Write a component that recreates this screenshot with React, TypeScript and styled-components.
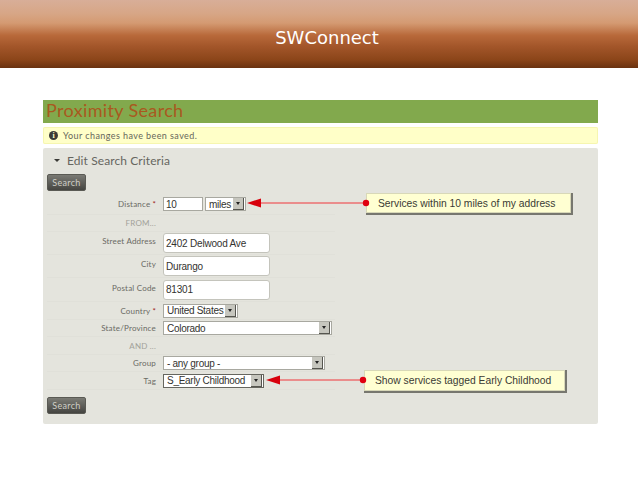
import React from 'react';
import styled, { createGlobalStyle } from 'styled-components';

const GlobalStyle = createGlobalStyle`
  html, body {
    margin: 0;
    padding: 0;
    background: #fff;
  }
`;

const Slide = styled.div`
  width: 638px;
  height: 478px;
  overflow: hidden;
  background: #fff;
`;

const Banner = styled.header`
  height: 68px;
  display: flex;
  align-items: center;
  justify-content: center;
  padding-left: 16px;
  padding-top: 7px;
  box-sizing: border-box;
  background: linear-gradient(
    to bottom,
    #d8ae98 0%,
    #d7a686 20%,
    #d49a72 34%,
    #b8693a 52%,
    #a3562a 68%,
    #8b4519 88%,
    #6a3210 100%
  );
  color: #fff;
  font-family: 'DejaVu Sans', Verdana, sans-serif;
  font-size: 18px;
`;

const Content = styled.main`
  margin: 32px 40px 0 43px;
  display: flex;
  flex-direction: column;
  gap: 4px;
`;

const TitleBar = styled.h1`
  margin: 0;
  height: 23px;
  padding-left: 3px;
  background: #82a94d;
  color: #a9591f;
  font-family: Lato, 'Open Sans', sans-serif;
  font-size: 18px;
  font-weight: 400;
  line-height: 20px;
  letter-spacing: 0.35px;
`;

const Notice = styled.div`
  height: 17px;
  display: flex;
  align-items: center;
  gap: 5px;
  padding-left: 6px;
  background: #ffffc8;
  border-radius: 2px;
  box-shadow: inset 0 0 0 1px #f6f6b0;
  color: #66665a;
  font-family: Lato, sans-serif;
  font-size: 9px;
  letter-spacing: 0.42px;
`;

const InfoDot = styled.span`
  width: 9px;
  height: 9px;
  border-radius: 50%;
  background: #3c3c38;
  color: #ffffc8;
  font-family: 'Liberation Serif', serif;
  font-size: 8px;
  font-weight: 700;
  line-height: 9px;
  text-align: center;
  letter-spacing: 0;
`;

const Panel = styled.section`
  position: relative;
  height: 276px;
  padding: 5px 4px 0;
  box-sizing: border-box;
  background: #e4e4dd;
  border-radius: 2px;
`;

const PanelTitle = styled.h2`
  margin: 0 0 6px 7px;
  height: 15px;
  display: flex;
  align-items: center;
  gap: 7px;
  color: #66665f;
  font-family: Lato, sans-serif;
  font-size: 12px;
  font-weight: 400;
  letter-spacing: 0.1px;
`;

const Caret = styled.span`
  width: 0;
  height: 0;
  margin-top: -1px;
  border-left: 3px solid transparent;
  border-right: 3px solid transparent;
  border-top: 3px solid #3a3a36;
`;

const SearchButton = styled.button`
  display: block;
  width: 39px;
  height: 17px;
  padding: 0;
  border: 1px solid #5a5a54;
  border-radius: 2px;
  background: linear-gradient(to bottom, #7a7a74, #454541);
  color: #cfcfc7;
  font-family: Lato, sans-serif;
  font-size: 9px;
  letter-spacing: 0.3px;
`;

const Form = styled.div`
  width: 288px;
  margin: 3px 0 7px;
  display: grid;
  grid-template-columns: 109px 1fr;
`;

const Label = styled.div<{ $height: number; $muted?: boolean }>`
  height: ${p => p.$height}px;
  display: flex;
  align-items: center;
  justify-content: flex-end;
  padding-bottom: ${p => (p.$height > 21 ? 4 : 0)}px;
  box-sizing: border-box;
  border-bottom: 1px solid #e0e0d9;
  color: ${p => (p.$muted ? '#a2a29a' : '#6a6a64')};
  font-family: Lato, sans-serif;
  font-size: 8px;
  letter-spacing: 0.2px;
  white-space: nowrap;
`;

const Required = styled.span`
  margin-left: 2px;
  color: #a02020;
`;

const Cell = styled.div<{ $height: number }>`
  height: ${p => p.$height}px;
  display: flex;
  align-items: center;
  gap: 2px;
  padding-left: 7px;
  box-sizing: border-box;
  border-bottom: 1px solid #e0e0d9;
`;

const TextBox = styled.input<{ $width: number; $round?: boolean }>`
  width: ${p => p.$width}px;
  height: ${p => (p.$round ? 20 : 14)}px;
  padding: 0 2px;
  box-sizing: border-box;
  border: 1px solid ${p => (p.$round ? '#c4c4bc' : '#a8a8a0')};
  border-radius: ${p => (p.$round ? 3 : 0)}px;
  background: #fff;
  color: #33332f;
  font-family: 'Liberation Sans', Arial, sans-serif;
  font-size: 10px;
  letter-spacing: -0.2px;
  outline: none;
`;

const SelectBox = styled.div<{ $width: number; $dark?: boolean }>`
  width: ${p => p.$width}px;
  height: 14px;
  display: flex;
  align-items: center;
  justify-content: space-between;
  padding: 0 1px 0 3px;
  box-sizing: border-box;
  border: 1px solid ${p => (p.$dark ? '#66665f' : '#a8a8a0')};
  background: #fff;
  color: #33332f;
  font-family: 'Liberation Sans', Arial, sans-serif;
  font-size: 10px;
  letter-spacing: -0.28px;
  white-space: nowrap;
`;

const SelectArrow = styled.span`
  width: 11px;
  height: 12px;
  display: flex;
  align-items: center;
  justify-content: center;
  flex-shrink: 0;
  background: #c6c6be;
  border-right: 1px solid #55554f;
  border-bottom: 1px solid #55554f;
  box-sizing: border-box;

  &::after {
    content: '';
    border-left: 2.5px solid transparent;
    border-right: 2.5px solid transparent;
    border-top: 3px solid #222;
  }
`;

const Callout = styled.div<{ $top: number; $left: number; $width: number; $height: number; $pad: number }>`
  position: absolute;
  top: ${p => p.$top}px;
  left: ${p => p.$left}px;
  width: ${p => p.$width}px;
  height: ${p => p.$height}px;
  display: flex;
  align-items: center;
  padding-left: ${p => p.$pad}px;
  box-sizing: border-box;
  background: #ffffd2;
  border: 1px solid #d8d8b8;
  box-shadow: 1px 1px 0 1px #77776f;
  color: #3a3a34;
  font-family: 'Liberation Sans', Arial, sans-serif;
  font-size: 10.3px;
  white-space: nowrap;
`;

const ArrowSvg = styled.svg<{ $top: number; $left: number }>`
  position: absolute;
  top: ${p => p.$top}px;
  left: ${p => p.$left}px;
`;

const Pointer = ({ top, left, width }: { top: number; left: number; width: number }) => (
  <ArrowSvg $top={top} $left={left} width={width} height={12} viewBox={`0 0 ${width} 12`}>
    <line x1={10} y1={6} x2={width - 4} y2={6} stroke="#f0373c" strokeWidth={1.2} />
    <polygon points="0,6 14,1.5 14,10.5" fill="#d8000c" />
    <circle cx={width - 4} cy={6} r={3.2} fill="#e00010" />
  </ArrowSvg>
);

const rows = [
  { label: 'Distance', required: true, h: 21 },
  { label: 'FROM...', muted: true, h: 17 },
  { label: 'Street Address', h: 23 },
  { label: 'City', h: 23 },
  { label: 'Postal Code', h: 24 },
  { label: 'Country', required: true, h: 18 },
  { label: 'State/Province', h: 17 },
  { label: 'AND ...', muted: true, h: 18 },
  { label: 'Group', h: 17 },
  { label: 'Tag', h: 18 },
];

const Fields: React.ReactNode[] = [
  <>
    <TextBox $width={40} defaultValue="10" />
    <SelectBox $width={41}>miles<SelectArrow /></SelectBox>
  </>,
  null,
  <TextBox $round $width={107} defaultValue="2402 Delwood Ave" />,
  <TextBox $round $width={107} defaultValue="Durango" />,
  <TextBox $round $width={107} defaultValue="81301" />,
  <SelectBox $width={75}>United States<SelectArrow /></SelectBox>,
  <SelectBox $width={169}>Colorado<SelectArrow /></SelectBox>,
  null,
  <SelectBox $width={162}>- any group -<SelectArrow /></SelectBox>,
  <SelectBox $dark $width={101}>S_Early Childhood<SelectArrow /></SelectBox>,
];

export default function App() {
  return (
    <Slide>
      <GlobalStyle />
      <Banner>SWConnect</Banner>
      <Content>
        <TitleBar>Proximity Search</TitleBar>
        <Notice>
          <InfoDot>i</InfoDot>
          Your changes have been saved.
        </Notice>
        <Panel>
          <PanelTitle>
            <Caret />
            Edit Search Criteria
          </PanelTitle>
          <SearchButton>Search</SearchButton>
          <Form>
            {rows.map((row, i) => (
              <React.Fragment key={row.label}>
                <Label $height={row.h} $muted={row.muted}>
                  {row.label}
                  {row.required && <Required>*</Required>}
                </Label>
                <Cell $height={row.h}>{Fields[i]}</Cell>
              </React.Fragment>
            ))}
          </Form>
          <SearchButton>Search</SearchButton>
          <Callout $top={45} $left={323} $width={205} $height={20} $pad={11}>
            Services within 10 miles of my address
          </Callout>
          <Pointer top={49} left={204} width={123} />
          <Callout $top={222} $left={321} $width={201} $height={21} $pad={10}>
            Show services tagged Early Childhood
          </Callout>
          <Pointer top={226} left={223} width={101} />
        </Panel>
      </Content>
    </Slide>
  );
}
